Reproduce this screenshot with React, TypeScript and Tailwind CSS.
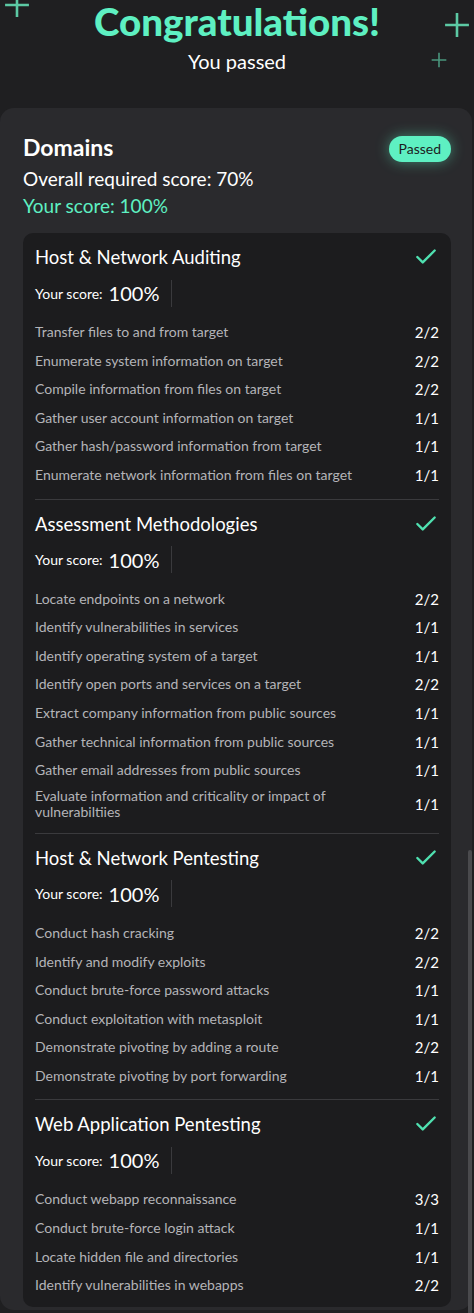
import { Check } from 'lucide-react'

interface Task {
  name: string;
  score: string;
}

interface Domain {
  title: string;
  score: string;
  tasks: Task[];
}

const domains: Domain[] = [
  {
    title: 'Host & Network Auditing',
    score: '100%',
    tasks: [
      { name: 'Transfer files to and from target', score: '2/2' },
      { name: 'Enumerate system information on target', score: '2/2' },
      { name: 'Compile information from files on target', score: '2/2' },
      { name: 'Gather user account information on target', score: '1/1' },
      { name: 'Gather hash/password information from target', score: '1/1' },
      { name: 'Enumerate network information from files on target', score: '1/1' },
    ],
  },
  {
    title: 'Assessment Methodologies',
    score: '100%',
    tasks: [
      { name: 'Locate endpoints on a network', score: '2/2' },
      { name: 'Identify vulnerabilities in services', score: '1/1' },
      { name: 'Identify operating system of a target', score: '1/1' },
      { name: 'Identify open ports and services on a target', score: '2/2' },
      { name: 'Extract company information from public sources', score: '1/1' },
      { name: 'Gather technical information from public sources', score: '1/1' },
      { name: 'Gather email addresses from public sources', score: '1/1' },
      { name: 'Evaluate information and criticality or impact of vulnerabiltiies', score: '1/1' },
    ],
  },
  {
    title: 'Host & Network Pentesting',
    score: '100%',
    tasks: [
      { name: 'Conduct hash cracking', score: '2/2' },
      { name: 'Identify and modify exploits', score: '2/2' },
      { name: 'Conduct brute-force password attacks', score: '1/1' },
      { name: 'Conduct exploitation with metasploit', score: '1/1' },
      { name: 'Demonstrate pivoting by adding a route', score: '2/2' },
      { name: 'Demonstrate pivoting by port forwarding', score: '1/1' },
    ],
  },
  {
    title: 'Web Application Pentesting',
    score: '100%',
    tasks: [
      { name: 'Conduct webapp reconnaissance', score: '3/3' },
      { name: 'Conduct brute-force login attack', score: '1/1' },
      { name: 'Locate hidden file and directories', score: '1/1' },
      { name: 'Identify vulnerabilities in webapps', score: '2/2' },
    ],
  },
]

// little "+" sparkle in the header
const Plus = ({ size, className }: { size: number; className: string }) => (
  <svg width={size} height={size} viewBox="0 0 24 24" className={className} fill="none">
    <path d="M12 1v22M1 12h22" stroke="#5cc9a4" strokeWidth="2.4" />
  </svg>
)

const DomainSection = ({ domain, last }: { domain: Domain; last: boolean }) => (
  <div className={last ? 'pt-[13px] pb-[7px]' : 'pt-[13px] pb-[9px] border-b border-[#3a3a3d]'}>
    <div className="flex items-center justify-between h-[22px]">
      <h3 className="text-[18.5px] leading-[22px] text-white">{domain.title}</h3>
      <Check size={26} strokeWidth={2.2} className="text-[#4fe0b0]" />
    </div>
    <div className="flex items-center mt-[11px] h-[28px]">
      <span className="text-[14px] text-white">Your score:</span>
      <span className="text-[20px] text-white ml-[6px]">{domain.score}</span>
      <div className="w-px h-[27px] bg-[#3a3a3d] ml-[12px]" />
    </div>
    <div className="mt-[11px] flex flex-col">
      {domain.tasks.map(t => (
        <div
          key={t.name}
          className={t.name.length > 60 ? 'flex items-center justify-between py-[3px]' : 'flex items-center justify-between py-[6px]'}
        >
          <span className="text-[14px] leading-[16.6px] text-[#b4b4b8] max-w-[340px]">{t.name}</span>
          <span className="text-[15px] leading-[16.6px] text-white">{t.score}</span>
        </div>
      ))}
    </div>
  </div>
)

export default function App() {
  return (
    <div className="relative w-[474px] h-[1313px] overflow-hidden bg-[#1f1f21] font-['Lato',sans-serif]">
      <Plus size={26} className="absolute left-[4px] -top-[8px]" />
      <Plus size={26} className="absolute left-[444px] top-[12px]" />
      <Plus size={16} className="absolute left-[431px] top-[52px] opacity-70" />

      <div className="flex flex-col items-center h-[108px]">
        <h1 className="text-[38.5px] leading-[40px] font-black text-[#5ef0c2] mt-[1px]">Congratulations!</h1>
        <p className="text-[20px] text-white mt-[5px]">You passed</p>
      </div>

      <div className="w-[472px] bg-[#2a2a2d] rounded-[14px] pl-[23px] pr-[21px] pt-[24px] pb-[3px]">
        <div className="flex items-start justify-between">
          <div>
            <h2 className="text-[23px] leading-[30px] font-bold text-white">Domains</h2>
            <p className="text-[19px] leading-[28px] text-white mt-[3px]">Overall required score: 70%</p>
            <p className="text-[19px] leading-[26px] text-[#5ef0c2]">Your score: 100%</p>
          </div>
          <span className="mt-[4px] bg-[#5ef0c2] text-[#1c1c1e] text-[14px] leading-[26px] px-[10px] rounded-full shadow-[0_0_14px_rgba(94,240,194,0.45)]">
            Passed
          </span>
        </div>

        <div className="mt-[14px] bg-[#1c1c1e] rounded-[10px] px-[12px]">
          {domains.map((d, i) => (
            <DomainSection key={d.title} domain={d} last={i === domains.length - 1} />
          ))}
        </div>
      </div>

      {/* scrollbar thumb */}
      <div className="absolute left-[468px] top-[850px] w-[4px] h-[470px] rounded-full bg-[#4a4a4d]" />
    </div>
  )
}
